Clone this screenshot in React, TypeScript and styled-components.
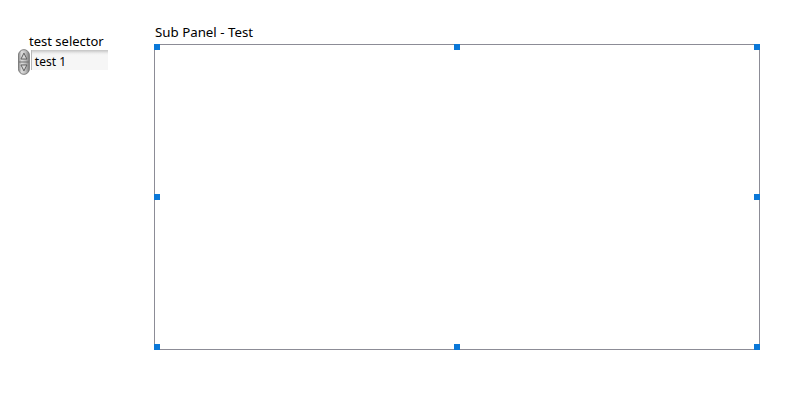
import { createGlobalStyle, styled } from "styled-components";

const GlobalStyle = createGlobalStyle`
    html, body {
        margin: 0;
        padding: 0;
        background: #ffffff;
    }
    body {
        font-family: "Segoe UI", "Noto Sans", "Open Sans", sans-serif;
        color: #000;
    }
`;

type HandleProps = { $x: "start" | "mid" | "end"; $y: "start" | "mid" | "end" };

const handles: HandleProps[] = [
    { $x: "start", $y: "start" },
    { $x: "mid", $y: "start" },
    { $x: "end", $y: "start" },
    { $x: "start", $y: "mid" },
    { $x: "end", $y: "mid" },
    { $x: "start", $y: "end" },
    { $x: "mid", $y: "end" },
    { $x: "end", $y: "end" },
];

const SpinButton = () => (
    <svg width="12" height="26" viewBox="0 0 12 26">
        <defs>
            <linearGradient id="spinGrad" x1="0" y1="0" x2="1" y2="0">
                <stop offset="0" stopColor="#8e8e8e" />
                <stop offset="0.3" stopColor="#dedede" />
                <stop offset="0.65" stopColor="#bdbdbd" />
                <stop offset="1" stopColor="#7e7e7e" />
            </linearGradient>
        </defs>
        <rect x="0.5" y="0.5" width="11" height="25" rx="5.5" fill="url(#spinGrad)" stroke="#7c7c7c" />
        <line x1="1" y1="13" x2="11" y2="13" stroke="#6e6e6e" />
        <path d="M3 10 L6 4 L9 10 Z" fill="#d6d6d6" stroke="#5e5e5e" strokeWidth="1" strokeLinejoin="round" />
        <path d="M3 16 L6 22 L9 16 Z" fill="#d6d6d6" stroke="#5e5e5e" strokeWidth="1" strokeLinejoin="round" />
    </svg>
);

const App = () => {
    return (
        <>
            <GlobalStyle />
            <Page>
                <SelectorColumn>
                    <SelectorLabel>test selector</SelectorLabel>
                    <SelectorRow>
                        <SpinButton />
                        <ValueField>test 1</ValueField>
                    </SelectorRow>
                </SelectorColumn>
                <PanelColumn>
                    <PanelTitle>Sub Panel - Test</PanelTitle>
                    <PanelBox>
                        {handles.map((h, i) => (
                            <Handle key={i} $x={h.$x} $y={h.$y} />
                        ))}
                    </PanelBox>
                </PanelColumn>
            </Page>
        </>
    );
};

const Page = styled.div`
    display: flex;
    align-items: flex-start;
    padding: 24px 0 0 18px;
    width: 808px;
    height: 400px;
    box-sizing: border-box;
`;

const SelectorColumn = styled.div`
    display: flex;
    flex-direction: column;
    width: 90px;
    margin: 8px 46px 0 0;
`;

const SelectorLabel = styled.div`
    font-size: 13px;
    line-height: 17px;
    padding: 1px 0 0 11px;
    margin-bottom: -1px;
    white-space: nowrap;
`;

const SelectorRow = styled.div`
    display: flex;
    align-items: flex-start;
    gap: 1px;
    svg {
        display: block;
    }
`;

const ValueField = styled.div`
    width: 78px;
    height: 20px;
    margin-top: 1px;
    box-sizing: border-box;
    padding: 5px 0 0 3px;
    font-size: 12px;
    line-height: 14px;
    background: linear-gradient(#c4c4c4 0, #dcdcdc 2px, #ebebeb 3px, #f6f6f6 5px, #f6f6f6 100%);
    border-left: 1px solid #b8b8b8;
`;

const PanelColumn = styled.div`
    display: flex;
    flex-direction: column;
`;

const PanelTitle = styled.div`
    font-size: 13.3px;
    line-height: 17px;
    padding: 0 0 3px 1px;
`;

const PanelBox = styled.div`
    position: relative;
    width: 606px;
    height: 306px;
    box-sizing: border-box;
    border: 1px solid #8c8c96;
`;

const Handle = styled.span<HandleProps>`
    position: absolute;
    width: 6px;
    height: 6px;
    background: #0a78d8;
    left: ${({ $x }) => ($x === "start" ? "-1px" : $x === "mid" ? "299px" : "599px")};
    top: ${({ $y }) => ($y === "start" ? "-1px" : $y === "mid" ? "149px" : "299px")};
`;

export default App;
